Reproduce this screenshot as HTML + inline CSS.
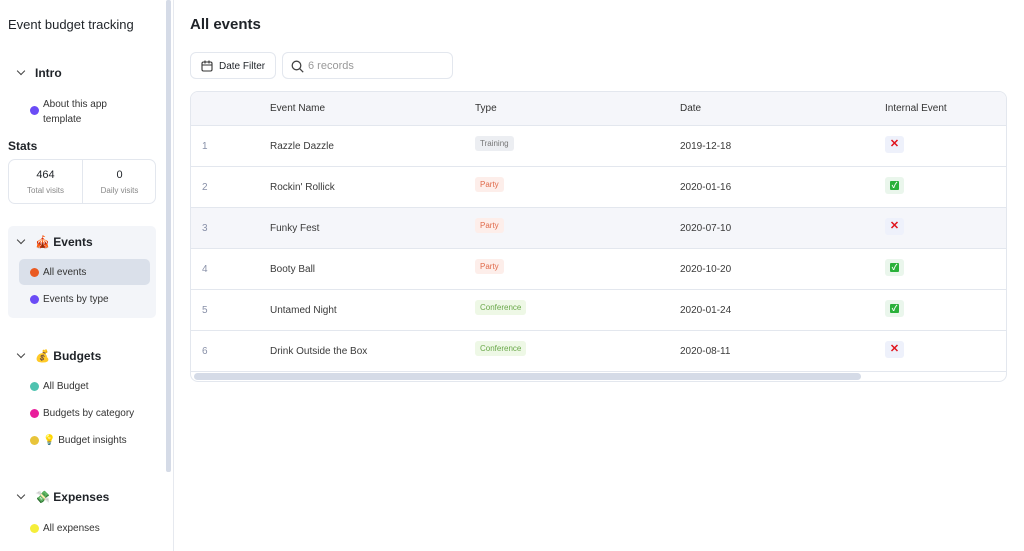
<!DOCTYPE html>
<html><head><meta charset="utf-8"><style>
*{box-sizing:border-box;margin:0;padding:0}
body{width:1024px;height:551px;overflow:hidden;background:#fff;font-family:"Liberation Sans","Noto Sans CJK SC",sans-serif;color:#1f2328;position:relative}
.sb{position:absolute;left:0;top:0;width:174px;height:551px;border-right:1px solid #e6e9ef}
.sbar{position:absolute;left:166px;top:0;width:5px;height:472px;background:#d5dbe7;border-radius:2px}
.t{position:absolute;font-size:13px}
.dot{position:absolute;width:9px;height:9px;border-radius:50%}
.chev{position:absolute;width:6px;height:6px;border-right:1.3px solid #444;border-bottom:1.3px solid #444;transform:rotate(45deg)}
.hd{position:absolute;font-size:12px;font-weight:bold}
.it{position:absolute;font-size:10px;color:#333}
.main{position:absolute;left:190px}
.tbl{position:absolute;left:190px;top:91px;width:817px;height:291px;border:1px solid #e3e7ee;border-radius:8px;overflow:hidden}
.row{position:absolute;left:0;width:100%;height:41px;border-top:1px solid #e3e7ee;font-size:10px;color:#3a3a3a}
.row span{position:absolute;top:15px}
.tag{position:absolute;top:10px;font-size:8px;padding:3px 5px;border-radius:3px}
.chk{position:absolute;left:694px;top:10px;width:19px;height:17px;border-radius:3px;font-size:11px;text-align:center;line-height:17px;font-weight:bold}
</style></head><body>
<div class="sb">
<div class="t" style="left:8px;top:17px;font-size:13px">Event budget tracking</div>
<div class="chev" style="left:18px;top:68px"></div>
<div class="hd" style="left:35px;top:66px">Intro</div>
<div class="dot" style="left:30px;top:106px;background:#6b4cf6"></div>
<div class="it" style="left:43px;top:97px;line-height:15px">About this app<br>template</div>
<div class="hd" style="left:8px;top:139px">Stats</div>
<div style="position:absolute;left:8px;top:159px;width:148px;height:45px;border:1px solid #e3e7ee;border-radius:7px">
<div style="position:absolute;left:73px;top:0;width:1px;height:100%;background:#e3e7ee"></div>
<div style="position:absolute;left:0;width:73px;top:9px;text-align:center;font-size:11px">464</div>
<div style="position:absolute;left:0;width:73px;top:26px;text-align:center;font-size:8px;color:#888">Total visits</div>
<div style="position:absolute;left:74px;width:73px;top:9px;text-align:center;font-size:11px">0</div>
<div style="position:absolute;left:74px;width:73px;top:26px;text-align:center;font-size:8px;color:#888">Daily visits</div>
</div>
<div style="position:absolute;left:8px;top:226px;width:148px;height:92px;background:#f3f5f9;border-radius:5px"></div>
<div class="chev" style="left:18px;top:237px"></div>
<div class="hd" style="left:35px;top:235px">🎪 Events</div>
<div style="position:absolute;left:19px;top:259px;width:131px;height:26px;background:#dae0ea;border-radius:5px"></div>
<div class="dot" style="left:30px;top:268px;background:#ea5a22"></div>
<div class="it" style="left:43px;top:267px">All events</div>
<div class="dot" style="left:30px;top:295px;background:#6b4cf6"></div>
<div class="it" style="left:43px;top:294px">Events by type</div>
<div class="chev" style="left:18px;top:351px"></div>
<div class="hd" style="left:35px;top:349px">💰 Budgets</div>
<div class="dot" style="left:30px;top:382px;background:#4fc3b0"></div>
<div class="it" style="left:43px;top:381px">All Budget</div>
<div class="dot" style="left:30px;top:409px;background:#e91e9c"></div>
<div class="it" style="left:43px;top:408px">Budgets by category</div>
<div class="dot" style="left:30px;top:436px;background:#e8c43a"></div>
<div class="it" style="left:43px;top:435px">💡 Budget insights</div>
<div class="chev" style="left:18px;top:492px"></div>
<div class="hd" style="left:35px;top:490px">💸 Expenses</div>
<div class="dot" style="left:30px;top:524px;background:#f5ee3a"></div>
<div class="it" style="left:43px;top:523px">All expenses</div>
</div>
<div class="sbar"></div>
<div class="main" style="top:16px;font-size:15px;font-weight:bold">All events</div>
<div style="position:absolute;left:190px;top:52px;width:86px;height:27px;border:1px solid #e3e7ee;border-radius:6px;font-size:10px">
<svg style="position:absolute;left:10px;top:7px" width="12" height="12" viewBox="0 0 12 12" fill="none" stroke="#333" stroke-width="1.1"><rect x="1" y="2" width="10" height="9" rx="1.5"/><path d="M1 5h10M4 0.5v3M8 0.5v3"/></svg>
<span style="position:absolute;left:28px;top:8px">Date Filter</span></div>
<div style="position:absolute;left:282px;top:52px;width:171px;height:27px;border:1px solid #e3e7ee;border-radius:6px;font-size:11px;color:#999">
<svg style="position:absolute;left:8px;top:7px" width="13" height="13" viewBox="0 0 13 13" fill="none" stroke="#444" stroke-width="1.3"><circle cx="5.5" cy="5.5" r="4.3"/><path d="M8.7 8.7l3.5 3.5"/></svg>
<span style="position:absolute;left:25px;top:7px">6 records</span></div>
<div class="tbl">
<div style="position:absolute;left:0;top:0;width:100%;height:33px;background:#f5f6fa;font-size:10px;color:#333">
<span style="position:absolute;left:79px;top:11px">Event Name</span>
<span style="position:absolute;left:284px;top:11px">Type</span>
<span style="position:absolute;left:489px;top:11px">Date</span>
<span style="position:absolute;left:694px;top:11px">Internal Event</span></div>
<div class="row" style="top:33px"><span style="left:11px;color:#8890a8">1</span><span style="left:79px">Razzle Dazzle</span><div class="tag" style="left:284px;background:#eceef2;color:#777">Training</div><span style="left:489px">2019-12-18</span><div class="chk" style="background:#eef1fb;color:#e0141e">✕</div></div>
<div class="row" style="top:74px"><span style="left:11px;color:#8890a8">2</span><span style="left:79px">Rockin' Rollick</span><div class="tag" style="left:284px;background:#fdeeea;color:#e06a4a">Party</div><span style="left:489px">2020-01-16</span><div class="chk" style="background:#eaf6ec"><span style="position:static;display:inline-block;width:9px;height:9px;background:#2ab13a;border-radius:1px;color:#fff;font-size:8px;line-height:9px;margin-top:4px">✓</span></div></div>
<div class="row" style="top:115px;background:#f5f6fa"><span style="left:11px;color:#8890a8">3</span><span style="left:79px">Funky Fest</span><div class="tag" style="left:284px;background:#fdeeea;color:#e06a4a">Party</div><span style="left:489px">2020-07-10</span><div class="chk" style="background:#eef1fb;color:#e0141e">✕</div></div>
<div class="row" style="top:156px"><span style="left:11px;color:#8890a8">4</span><span style="left:79px">Booty Ball</span><div class="tag" style="left:284px;background:#fdeeea;color:#e06a4a">Party</div><span style="left:489px">2020-10-20</span><div class="chk" style="background:#eaf6ec"><span style="position:static;display:inline-block;width:9px;height:9px;background:#2ab13a;border-radius:1px;color:#fff;font-size:8px;line-height:9px;margin-top:4px">✓</span></div></div>
<div class="row" style="top:197px"><span style="left:11px;color:#8890a8">5</span><span style="left:79px">Untamed Night</span><div class="tag" style="left:284px;background:#eef8e6;color:#6aa84a">Conference</div><span style="left:489px">2020-01-24</span><div class="chk" style="background:#eaf6ec"><span style="position:static;display:inline-block;width:9px;height:9px;background:#2ab13a;border-radius:1px;color:#fff;font-size:8px;line-height:9px;margin-top:4px">✓</span></div></div>
<div class="row" style="top:238px"><span style="left:11px;color:#8890a8">6</span><span style="left:79px">Drink Outside the Box</span><div class="tag" style="left:284px;background:#eef8e6;color:#6aa84a">Conference</div><span style="left:489px">2020-08-11</span><div class="chk" style="background:#eef1fb;color:#e0141e">✕</div></div>
<div style="position:absolute;left:0;top:279px;width:100%;border-top:1px solid #e3e7ee"></div>
<div style="position:absolute;left:3px;top:281px;width:667px;height:7px;background:#d5dbe7;border-radius:4px"></div>
</div>
</body></html>
